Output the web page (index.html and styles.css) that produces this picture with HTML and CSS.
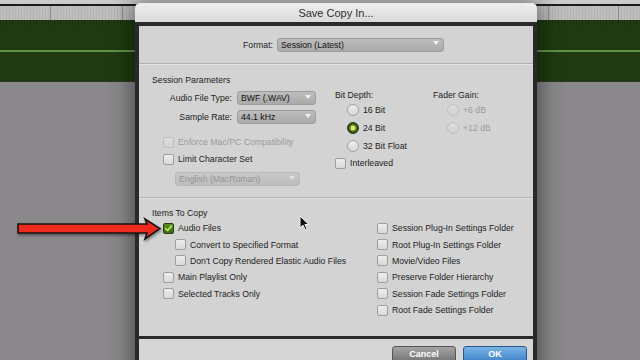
FILE: index.html
```html
<!DOCTYPE html>
<html lang="en">
<head>
  <meta charset="UTF-8">
  <title>Save Copy In</title>
  <link rel="stylesheet" href="styles.css">
</head>
<body>
  <div class="stage">
    <div class="backdrop">
      <div class="edge"></div>
      <div class="rule-line"></div>
      <div class="ruler"></div>
      <div class="track"><div class="track-line"></div></div>
      <div class="floor"></div>
    </div>

    <div class="dialog">
      <div class="titlebar">Save Copy In...</div>

      <div class="panel">
        <div class="format-row">
          <span class="format-label">Format:</span>
          <div class="select format-select"><span>Session (Latest)</span><i class="caret"></i></div>
        </div>

        <div class="session">
          <div class="col-params">
            <div class="group-title">Session Parameters</div>
            <div class="field first">
              <span class="field-label">Audio File Type:</span>
              <div class="select small-select"><span>BWF (.WAV)</span><i class="caret"></i></div>
            </div>
            <div class="field">
              <span class="field-label">Sample Rate:</span>
              <div class="select small-select"><span>44.1 kHz</span><i class="caret"></i></div>
            </div>
            <div class="check indent disabled enforce"><span class="box"></span>Enforce Mac/PC Compatibility</div>
            <div class="check indent limit"><span class="box"></span>Limit Character Set</div>
            <div class="select charset-select disabled"><span>English (MacRoman)</span><i class="caret"></i></div>
          </div>

          <div class="col-bits">
            <div class="group-title">Bit Depth:</div>
            <div class="radio"><span class="dot"></span>16 Bit</div>
            <div class="radio"><span class="dot on"></span>24 Bit</div>
            <div class="radio"><span class="dot"></span>32 Bit Float</div>
            <div class="check interleaved"><span class="box"></span>Interleaved</div>
          </div>

          <div class="col-fader">
            <div class="group-title">Fader Gain:</div>
            <div class="radio disabled"><span class="dot"></span>+6 dB</div>
            <div class="radio disabled"><span class="dot"></span>+12 dB</div>
          </div>
        </div>

        <div class="items">
          <div class="group-title">Items To Copy</div>
          <div class="item-cols">
            <div class="items-left">
              <div class="row indent"><span class="box checked"><svg viewBox="0 0 11 11" width="9" height="9"><path d="M2 5.6 L4.4 8 L9 2.6" fill="none" stroke="#b4ec4c" stroke-width="2" stroke-linecap="round" stroke-linejoin="round"/></svg></span>Audio Files</div>
              <div class="row sub"><span class="box"></span>Convert to Specified Format</div>
              <div class="row sub"><span class="box"></span>Don't Copy Rendered Elastic Audio Files</div>
              <div class="row indent"><span class="box"></span>Main Playlist Only</div>
              <div class="row indent"><span class="box"></span>Selected Tracks Only</div>
            </div>
            <div class="items-right">
              <div class="row"><span class="box"></span>Session Plug-In Settings Folder</div>
              <div class="row"><span class="box"></span>Root Plug-In Settings Folder</div>
              <div class="row"><span class="box"></span>Movie/Video Files</div>
              <div class="row"><span class="box"></span>Preserve Folder Hierarchy</div>
              <div class="row"><span class="box"></span>Session Fade Settings Folder</div>
              <div class="row"><span class="box"></span>Root Fade Settings Folder</div>
            </div>
          </div>
        </div>
      </div>

      <div class="buttonbar">
        <button class="btn cancel">Cancel</button>
        <button class="btn ok">OK</button>
      </div>
    </div>

    <!-- annotation arrow drawn over the video frame -->
    <svg class="pointer-arrow" width="152" height="30" viewBox="0 0 152 30">
      <polygon points="4,10 133,10 131,5 146,14.5 131,25 133,19 4,19" fill="#ee2a1f" stroke="#151515" stroke-width="1.6" stroke-linejoin="miter"/>
    </svg>

    <svg class="mouse" width="11" height="16" viewBox="0 0 11 16">
      <path d="M1 1 L1 13 L4 10.2 L6.2 14.8 L8 14 L5.9 9.5 L9.8 9.5 Z" fill="#111" stroke="#f4f4f4" stroke-width="1"/>
    </svg>
  </div>
</body>
</html>
```

FILE: styles.css
```css
:root {
  --frame: #2a2a2a;
  --panel: #d3d3d3;
  --text: #1c1c1c;
  --muted: #9b9b9b;
  --line: #b1b1b1;
}

* {
  box-sizing: border-box;
}

body {
  margin: 0;
  font-family: 'Liberation Sans', Arial, sans-serif;
  font-size: 8.7px;
  color: var(--text);
}

.stage {
  position: relative;
  width: 640px;
  height: 360px;
  overflow: hidden;
  background: #8a888a;
}

/* session window behind the dialog */
.backdrop {
  display: flex;
  flex-direction: column;
  height: 100%;
}

.edge {
  height: 4px;
  background: #cbcbcb;
}

.rule-line {
  height: 2px;
  background: #1c1c1c;
}

.ruler {
  height: 14px;
  background-color: #bebebe;
  background-image:
    linear-gradient(#8c8c8c, #8c8c8c),
    linear-gradient(#8c8c8c, #8c8c8c),
    linear-gradient(#8c8c8c, #8c8c8c),
    linear-gradient(#8c8c8c, #8c8c8c),
    repeating-linear-gradient(90deg, rgba(0, 0, 0, 0.05) 0 1px, transparent 1px 3px);
  background-size: 1px 100%, 1px 100%, 1px 100%, 1px 100%, auto;
  background-position: 50px 0, 122px 0, 548px 0, 618px 0, 0 0;
  background-repeat: no-repeat, no-repeat, no-repeat, no-repeat, repeat;
}

.track {
  height: 62px;
  background-color: #1f3a10;
  background-image: repeating-linear-gradient(90deg, rgba(0, 0, 0, 0.18) 0 1px, transparent 1px 6px);
  background-size: 100% 6px;
  background-repeat: no-repeat;
  border-bottom: 1px solid #2c3a24;
}

.track-line {
  height: 2px;
  margin-top: 30px;
  background: #5f9248;
}

.floor {
  flex: 1;
  background: #8a888a;
}

/* dialog */
.dialog {
  position: absolute;
  left: 135px;
  top: 3px;
  width: 402px;
  height: 380px;
  display: flex;
  flex-direction: column;
  background: var(--frame);
  border-radius: 5px 5px 0 0;
  box-shadow: 0 0 22px 3px rgba(0, 0, 0, 0.45);
}

.titlebar {
  height: 19px;
  line-height: 20px;
  text-align: center;
  font-size: 11px;
  color: #2e2e2e;
  background: linear-gradient(#eeeeee, #dadada);
  border-radius: 5px 5px 0 0;
}

.panel {
  margin: 4px 4px 0;
  height: 310px;
  background: var(--panel);
  display: flex;
  flex-direction: column;
}

.format-row {
  height: 37px;
  display: flex;
  align-items: center;
  padding-left: 103px;
}

.format-label {
  width: 35px;
  text-align: right;
  padding-right: 4px;
}

.select {
  height: 14px;
  display: flex;
  align-items: center;
  justify-content: space-between;
  padding: 0 4px 0 3px;
  border: 1px solid #9c9c9c;
  border-radius: 3px;
  background: linear-gradient(#bdbdbd, #a9a9a9);
  color: #111;
}

.select .caret {
  width: 0;
  height: 0;
  margin-bottom: 3px;
  border-left: 3px solid transparent;
  border-right: 3px solid transparent;
  border-top: 4px solid #f2f2f2;
}

.format-select {
  width: 167px;
}

.small-select {
  width: 79px;
}

.charset-select {
  width: 125px;
  margin: 6px 0 0 23px;
}

.select.disabled {
  color: #959595;
  border-color: #b8b8b8;
  background: linear-gradient(#c8c8c8, #bdbdbd);
}

.select.disabled .caret {
  border-top-color: #e2e2e2;
}

.session {
  height: 134px;
  display: flex;
  padding: 10px 0 0 13px;
  border-top: 1px solid var(--line);
  box-shadow: inset 0 1px #e2e2e2;
}

.group-title {
  line-height: 12px;
  white-space: nowrap;
}

.col-params {
  width: 183px;
}

.field {
  height: 14px;
  display: flex;
  align-items: center;
  margin-top: 5px;
}

.field-label {
  width: 80px;
  margin-right: 5px;
  text-align: right;
  white-space: nowrap;
}

.check,
.radio,
.row {
  display: flex;
  align-items: center;
  white-space: nowrap;
}

.check {
  height: 14px;
}

.enforce {
  margin-top: 11px;
}

.limit {
  margin-top: 3px;
}

.indent {
  padding-left: 11px;
}

.disabled {
  color: var(--muted);
}

.box {
  width: 11px;
  height: 11px;
  flex: none;
  margin-right: 4px;
  display: flex;
  align-items: center;
  justify-content: center;
  border: 1px solid #9d9d9d;
  border-radius: 2px;
  background: linear-gradient(#ededed, #d9d9d9);
}

.disabled .box {
  border-color: #bebebe;
  background: linear-gradient(#dedede, #d3d3d3);
}

.box.checked {
  border-color: #2b3b14;
  background: linear-gradient(#5b8a2a, #3f6a1a);
}

.col-bits {
  width: 98px;
  margin-top: 15px;
}

.col-bits .radio {
  padding-left: 12px;
}

.col-fader {
  margin-top: 15px;
}

.col-fader .radio {
  padding-left: 14px;
}

.radio {
  height: 18px;
}

.dot {
  width: 12px;
  height: 12px;
  flex: none;
  margin-right: 4px;
  border: 1px solid #a0a0a0;
  border-radius: 50%;
  background: linear-gradient(#eeeeee, #d8d8d8);
}

.radio.disabled .dot {
  border-color: #c0c0c0;
  background: linear-gradient(#dddddd, #d2d2d2);
}

.dot.on {
  border-color: #26350f;
  background: radial-gradient(circle, #dcf25e 0 2px, #6a8c2c 2.6px 3.4px, #33471a 4px);
}

.interleaved {
  margin-top: 1px;
}

.items {
  flex: 1;
  padding: 9px 0 0 13px;
  border-top: 1px solid var(--line);
  box-shadow: inset 0 1px #e2e2e2;
}

.item-cols {
  display: flex;
  margin-top: 1px;
}

.items-left {
  width: 225px;
}

.row {
  height: 16.4px;
}

.row.sub {
  padding-left: 23px;
}

.buttonbar {
  flex: 1;
  margin: 3px 4px 0;
  display: flex;
  justify-content: flex-end;
  align-items: flex-start;
  gap: 7px;
  padding: 7px 6px 0 0;
  background: #d6d6d6;
}

.btn {
  width: 64px;
  height: 20px;
  padding: 0 0 5px;
  font-family: 'Liberation Sans', Arial, sans-serif;
  font-size: 9px;
  font-weight: bold;
  color: #fff;
  border-radius: 3px;
  cursor: pointer;
}

.btn.cancel {
  border: 1px solid #555;
  background: linear-gradient(#a3a3a3, #6b6b6b);
}

.btn.ok {
  border: 1px solid #28588e;
  background: linear-gradient(#79b4e6, #3277c2);
}

.pointer-arrow {
  position: absolute;
  left: 14px;
  top: 214px;
  filter: drop-shadow(1px 2px 1px rgba(0, 0, 0, 0.35));
}

.mouse {
  position: absolute;
  left: 299px;
  top: 215px;
}
```
